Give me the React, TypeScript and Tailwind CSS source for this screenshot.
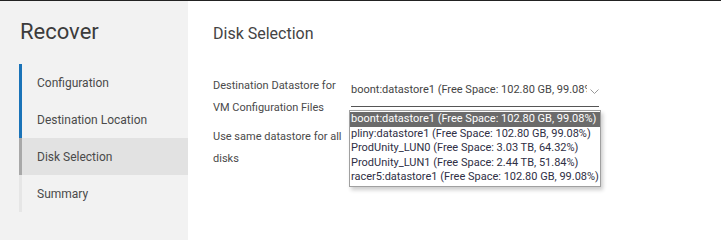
import React from "react";

const items = [
  "boont:datastore1 (Free Space: 102.80 GB, 99.08%)",
  "pliny:datastore1 (Free Space: 102.80 GB, 99.08%)",
  "ProdUnity_LUN0 (Free Space: 3.03 TB, 64.32%)",
  "ProdUnity_LUN1 (Free Space: 2.44 TB, 51.84%)",
  "racer5:datastore1 (Free Space: 102.80 GB, 99.08%)",
];

export default function App() {
  return (
    <div
      className="w-[721px] h-[240px] border-t border-[#222] bg-white flex text-[#444] overflow-hidden"
      style={{ fontFamily: "Roboto, 'Liberation Sans', sans-serif" }}
    >
      <aside className="w-[188px] bg-[#f2f2f2] pt-[16px] shrink-0">
        <h1 className="pl-[20px] text-[22px] leading-[30px] text-[#3c3c3c] font-normal">Recover</h1>
        <nav className="mt-[17px] ml-[19px] text-[12px] text-[#4a4a4a]">
          <div className="h-[37px] border-l-[3px] border-[#1a73b8] flex items-center pl-[15px]">Configuration</div>
          <div className="h-[37px] border-l-[3px] border-[#1a73b8] flex items-center pl-[15px]">Destination Location</div>
          <div className="h-[37px] border-l-[3px] border-[#a8a8a8] bg-[#e2e2e2] flex items-center pl-[15px]">Disk Selection</div>
          <div className="h-[37px] border-l-[3px] border-[#e6e6e6] flex items-center pl-[15px]">Summary</div>
        </nav>
      </aside>
      <main className="flex-1 pl-[25px] pt-[22px]">
        <h2 className="text-[16px] leading-[22px] text-[#444] font-normal">Disk Selection</h2>
        <div className="mt-[28px] flex">
          <div className="w-[138px] pt-[2px] text-[11px] leading-[22px] text-[#4a4a4a]">
            <div>Destination Datastore for</div>
            <div>VM Configuration Files</div>
            <div className="mt-[7px]">Use same datastore for all</div>
            <div>disks</div>
          </div>
          <div className="relative w-[248px] pt-[6px]">
            <div className="flex items-center border-b border-[#555] h-[28px] pb-[5px]">
              <span className="text-[11px] text-[#444] whitespace-nowrap overflow-hidden w-[236px]">
                {items[0]}
              </span>
              <svg width="9" height="5" viewBox="0 0 9 5" className="ml-[3px] mt-[3px]">
                <path d="M0.5 0.5 L4.5 4.5 L8.5 0.5" stroke="#999" strokeWidth="1" fill="none" />
              </svg>
            </div>
            <div className="absolute left-[-2px] top-[37px] w-[252px] bg-white border border-[#a0a0a0] shadow-[2px_3px_4px_rgba(0,0,0,0.2)] py-[1px] text-[11px] text-[#2f2f45]">
              {items.map((t, i) => (
                <div
                  key={t}
                  className={
                    "h-[14.5px] leading-[14.5px] pl-[1px] whitespace-nowrap " +
                    (i === 0 ? "bg-[#6b6b6b] text-white" : "")
                  }
                >
                  {t}
                </div>
              ))}
            </div>
          </div>
        </div>
      </main>
    </div>
  );
}
